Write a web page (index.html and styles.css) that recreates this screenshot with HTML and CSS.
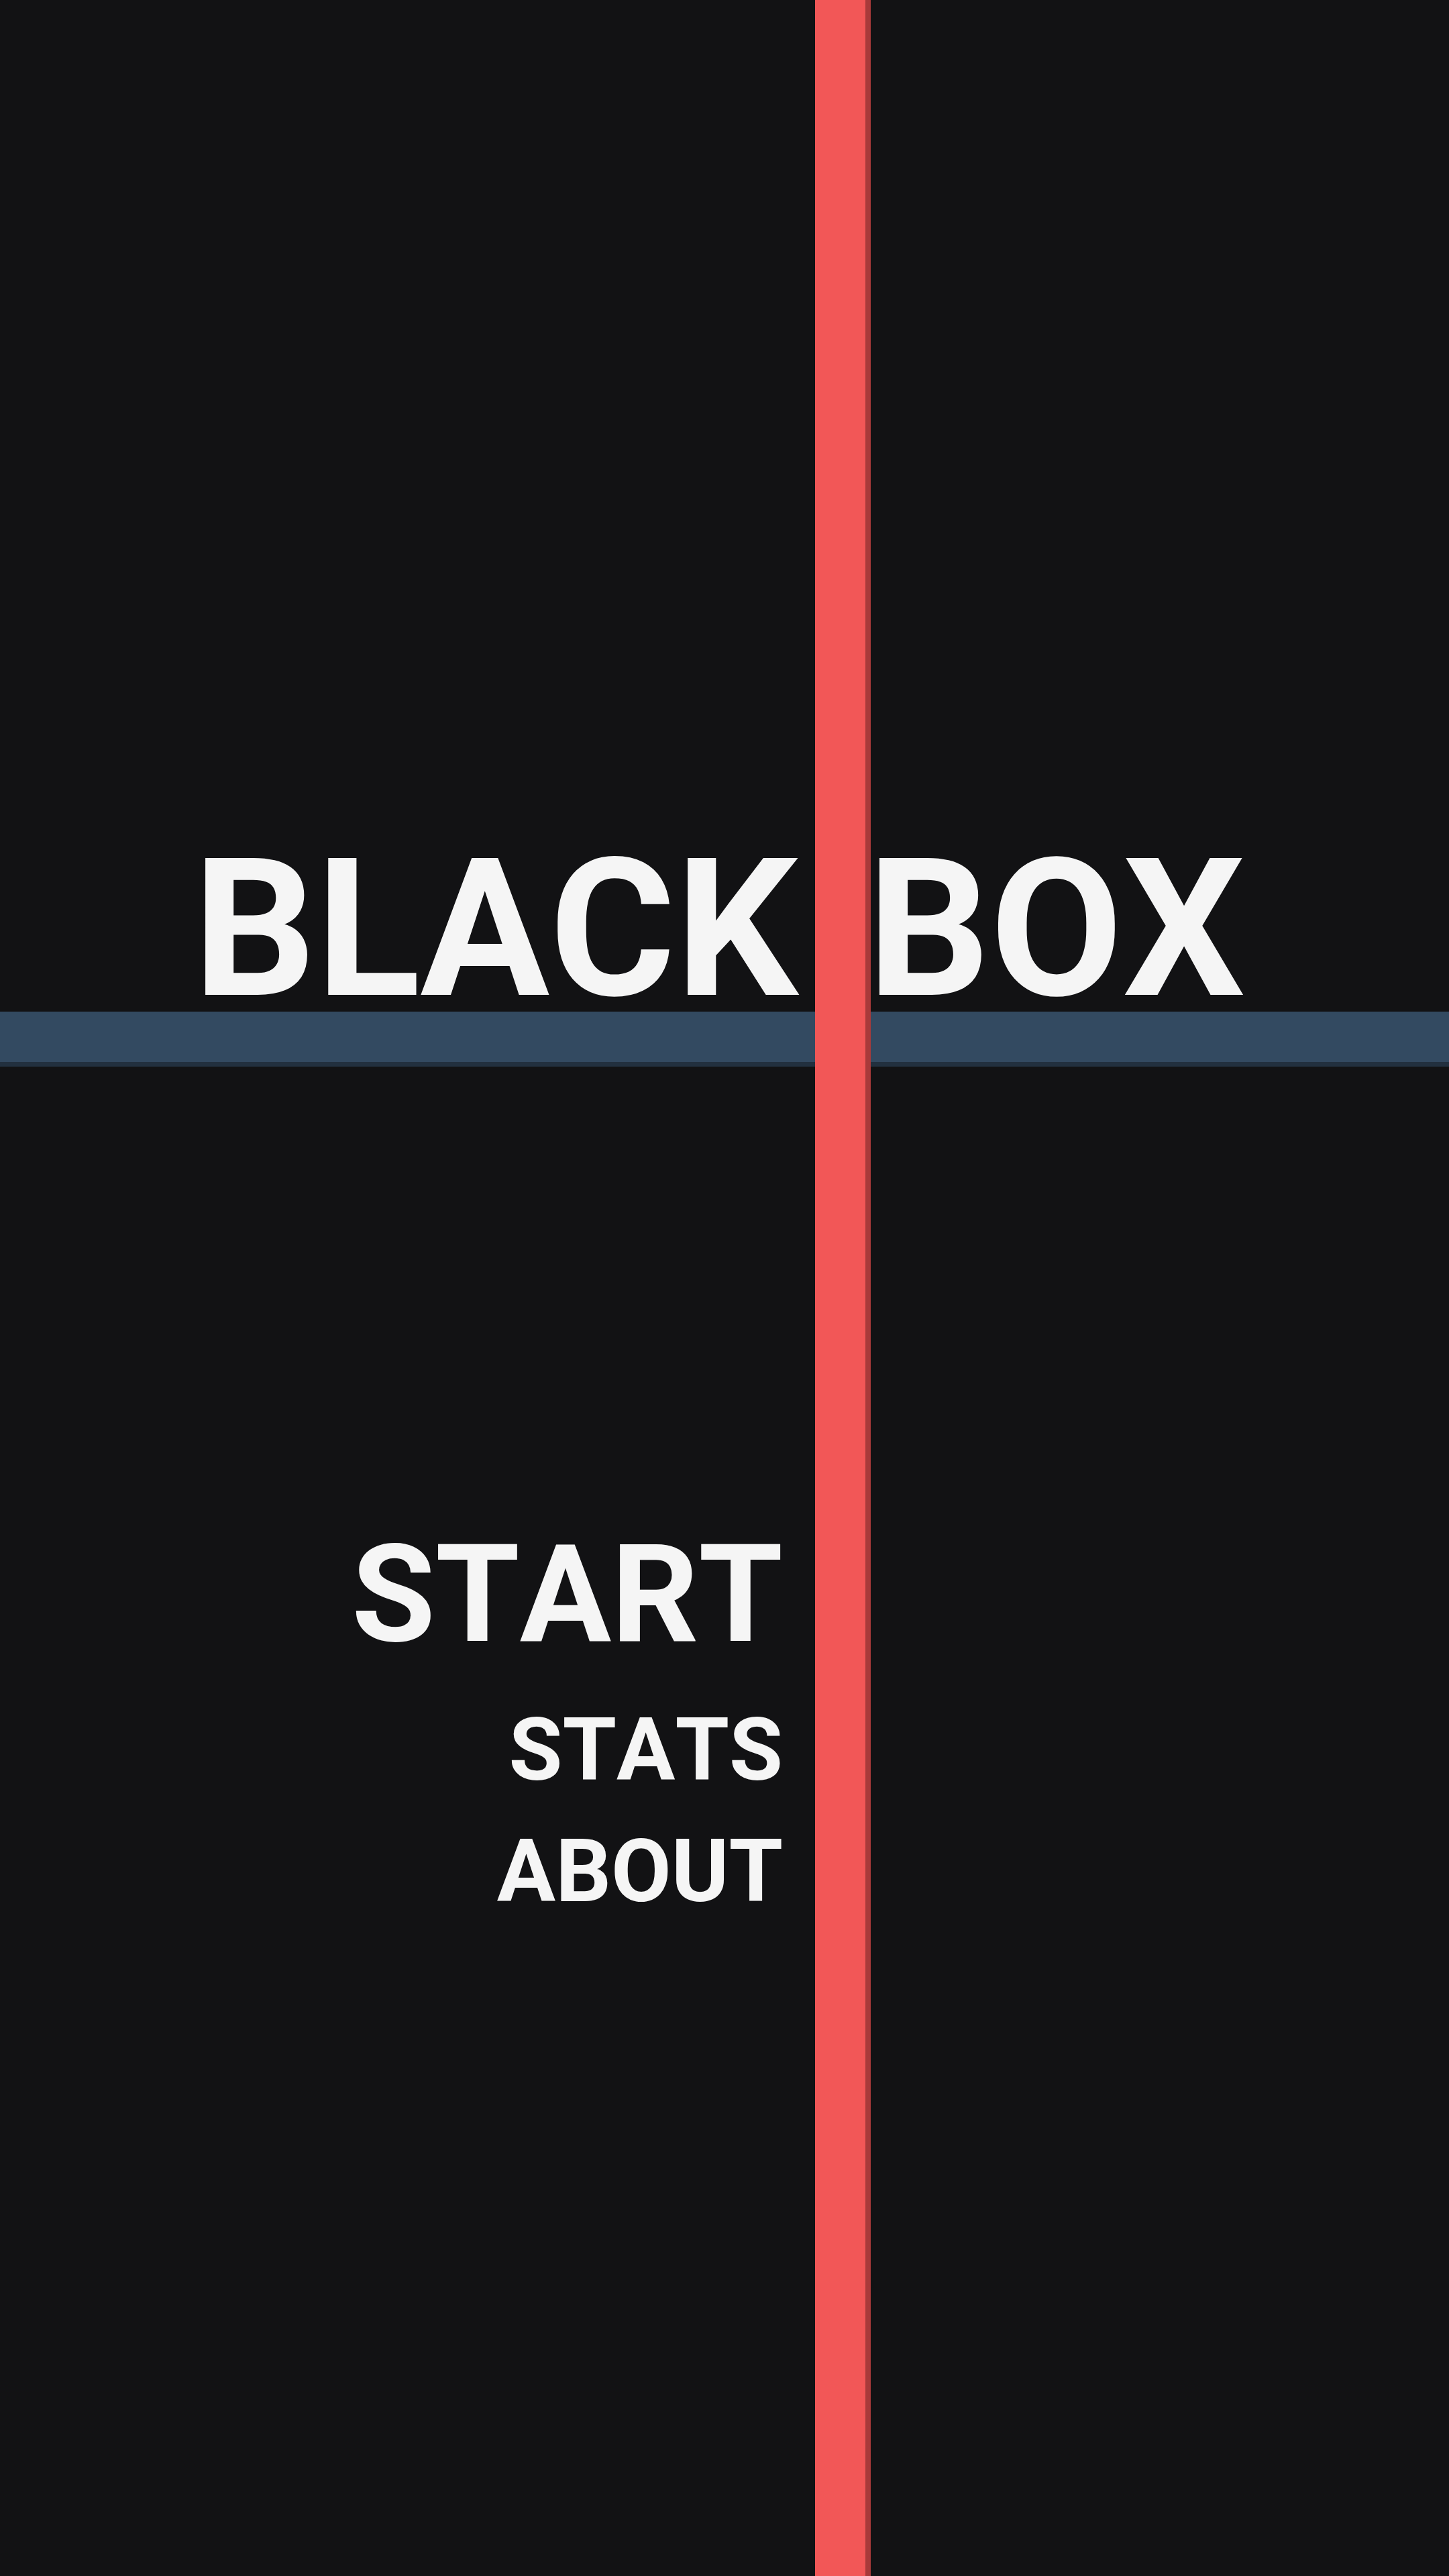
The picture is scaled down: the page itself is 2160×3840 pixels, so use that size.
FILE: index.html
```html
<!DOCTYPE html>
<html lang="en">
<head>
    <meta charset="UTF-8">
    <meta name="viewport" content="width=device-width, initial-scale=1.0">
    <title>Black Box</title>
    <link rel="stylesheet" href="styles.css">
</head>
<body>
    <div class="screen">
        <div class="hero">
            <h1 class="title">BLACK BOX</h1>
        </div>
        <div class="band"></div>
        <nav class="menu">
            <a class="menu-item main" href="#">START</a>
            <a class="menu-item" href="#">STATS</a>
            <a class="menu-item" href="#">ABOUT</a>
        </nav>
        <div class="beam"></div>
    </div>
</body>
</html>
```

FILE: styles.css
```css
html, body {
    margin: 0;
    padding: 0;
    background: #121214;
}
.screen {
    position: relative;
    width: 2160px;
    height: 3840px;
    overflow: hidden;
    font-family: Roboto, "Liberation Sans", sans-serif;
    font-weight: 700;
    font-kerning: none;
    color: #f5f5f5;
}
.hero {
    height: 1508px;
    display: flex;
    flex-direction: column;
    justify-content: flex-end;
}
.title {
    margin: 0 0 7px;
    padding-right: 16px;
    font-size: 287px;
    font-weight: 700;
    line-height: 0.8;
    text-align: center;
    word-spacing: 32px;
}
.band {
    height: 75px;
    background: #334a61;
    border-bottom: 7px solid #22303f;
}
.menu {
    width: 1167px;
    margin-top: 686px;
    display: flex;
    flex-direction: column;
    align-items: flex-end;
}
.menu-item {
    color: #f5f5f5;
    text-decoration: none;
    font-size: 130px;
    line-height: 1;
    margin-bottom: 51px;
}
.menu-item.main {
    font-size: 203px;
    margin-bottom: 65px;
}
/* red vertical beam, drawn over the band */
.beam {
    position: absolute;
    top: 0;
    left: 1215px;
    width: 75px;
    height: 100%;
    background: #f25757;
    border-right: 8px solid #a83a3a;
}
```
